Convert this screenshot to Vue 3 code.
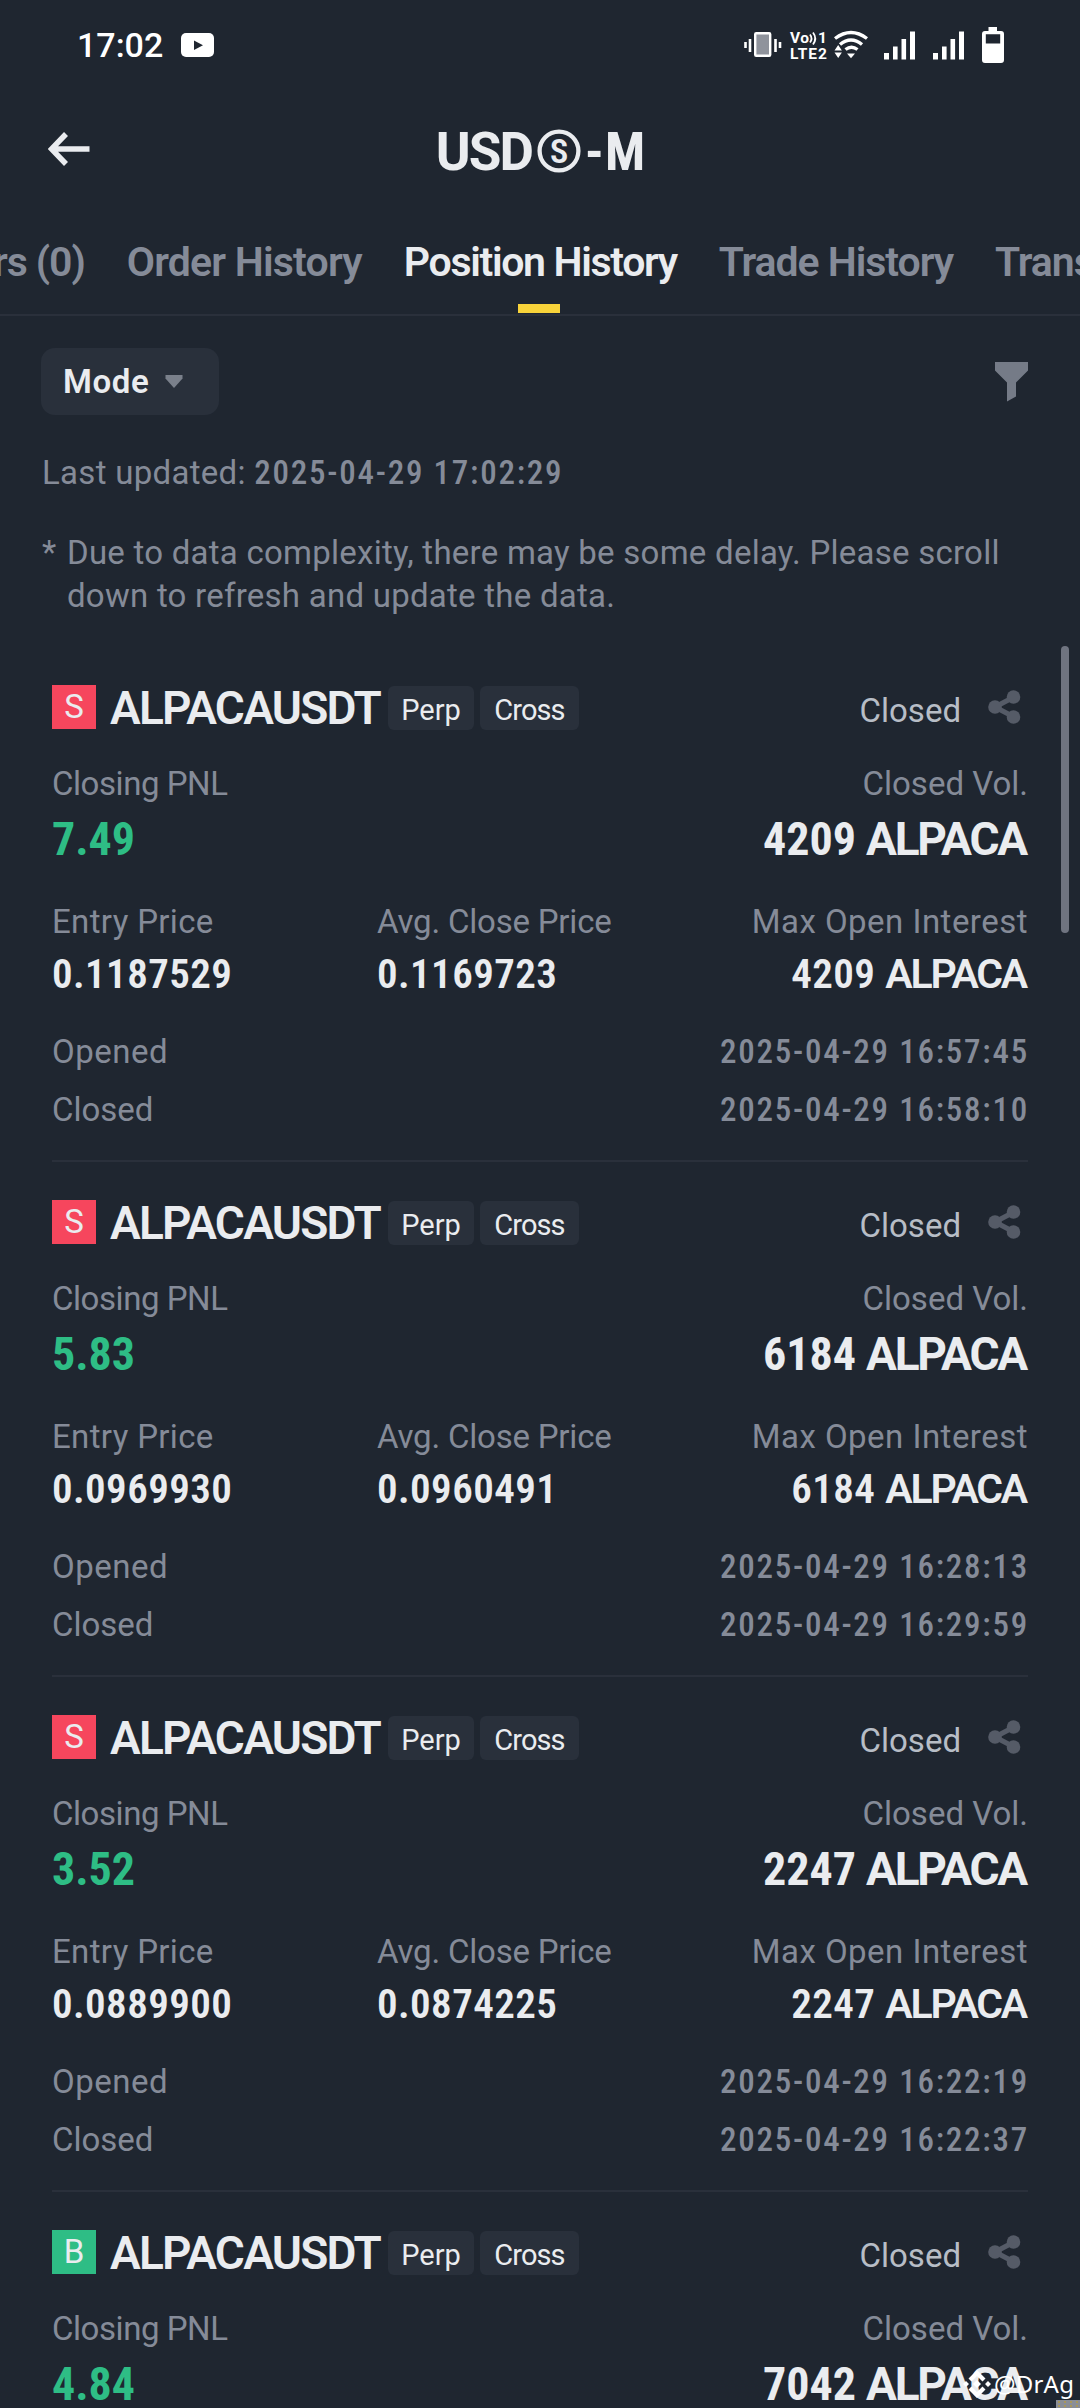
<template>
  <div class="screen">
    <!-- Status bar -->
    <div class="status-bar">
      <span class="clock">17:02</span>
      <svg class="youtube" width="33" height="24" viewBox="0 0 33 24">
        <rect width="33" height="24" rx="5" fill="#fff" />
        <path d="M13 7.5v9.5l9-4.7z" fill="#1f2630" />
      </svg>
      <div class="status-icons">
        <svg class="vibrate" width="38" height="28" viewBox="0 0 38 28">
          <rect x="11.2" y="2.2" width="15" height="22.6" rx="1" fill="#8f939c" stroke="#fff" stroke-width="2.4" />
          <path d="M1.5 11v6M6 8v13M31.5 8v13M36 11v6" stroke="#fff" stroke-width="2.6" />
        </svg>
        <svg class="volte" width="38" height="30" viewBox="0 0 38 30">
          <text x="0" y="13" class="volte-text" textLength="19">Vo</text>
          <path d="M20 4.5q3 4 0 8M23 2.5q4.500 6 0 12" fill="none" stroke="#fff" stroke-width="1.8" />
          <text x="28" y="12.500" class="volte-text">1</text>
          <text x="0" y="28.500" class="volte-text" textLength="37">LTE2</text>
        </svg>
        <svg class="wifi" width="34" height="30" viewBox="0 0 34 30">
          <g fill="none" stroke="#fff" stroke-width="3.4">
            <path d="M1 8.500Q17 -3.500 33 8.500" />
            <path d="M6 14.500Q17 5.500 28 14.500" />
            <path d="M11.500 19.500Q17.500 15 23.500 19.500" />
          </g>
          <path d="M13 23.500h8l-4 4.800z" fill="#fff" />
          <path d="M0.500 20.500l3.700-5.500 3.700 5.500zM0.500 22.500h7.400l-3.700 5.500z" fill="#fff" />
        </svg>
        <svg v-for="n in 2" :key="n" :class="'signal-' + n" width="32" height="29" viewBox="0 0 32 29" fill="#fff">
          <path d="M0 22h5v6.500H0zM9 15.500h4.600v13H9zM17.500 8h4.600v20.500h-4.600zM26 0.500h5v28h-5z" />
        </svg>
        <svg class="battery" width="22" height="36" viewBox="0 0 22 36">
          <path fill="#fff" fill-rule="evenodd" d="M6.500 0h8.500v4H19a3 3 0 0 1 3 3v26a3 3 0 0 1-3 3H3a3 3 0 0 1-3-3V7a3 3 0 0 1 3-3h3.500zM3.800 7.200v9.300h14.400V7.200z" />
        </svg>
      </div>
    </div>

    <!-- Header -->
    <header class="header">
      <svg class="back" width="42" height="34" viewBox="0 0 42 34" fill="none" stroke="#eaecef" stroke-width="5.500">
        <path d="M4 17h37.500M18 2L3.500 17 18 32" />
      </svg>
      <h1 class="title">
        <span class="title-usd">USD</span>
        <svg class="coin" width="44" height="44" viewBox="0 0 44 44">
          <circle cx="22" cy="22" r="19.400" fill="none" stroke="#eaecef" stroke-width="4.300" />
          <text x="22" y="34" class="coin-text" text-anchor="middle">S</text>
        </svg>
        <span class="title-m">-M</span>
      </h1>
    </header>

    <!-- Tabs -->
    <nav class="tabs">
      <a v-for="tab in tabs" :key="tab" class="tab" :class="{ active: tab === activeTab }" @click="activeTab = tab">{{ tab }}</a>
    </nav>

    <!-- Filters -->
    <div class="toolbar">
      <button class="mode">
        <span>Mode</span>
        <svg width="18" height="13" viewBox="0 0 18 13" fill="#7a808b"><path d="M0.500 0h17v3.500L9 13 0.500 3.500z" /></svg>
      </button>
      <svg class="funnel" width="33" height="40" viewBox="0 0 33 40" fill="#757b87">
        <path d="M0 0h33v8.500L21 20.500v14L12 39.500v-19L0 8.500z" />
      </svg>
    </div>
    <p class="updated">Last updated: <span class="stamp">2025-04-29 17:02:29</span></p>
    <div class="note">
      <span class="star">*</span>
      <p class="note-text">
        <span class="line">Due to data complexity, there may be some delay. Please scroll</span>
        <span class="line">down to refresh and update the data.</span>
      </p>
    </div>

    <!-- Positions -->
    <section class="list">
      <article v-for="(p, i) in positions" :key="i" class="card">
        <div class="card-head">
          <span class="side" :class="p.side === 'B' ? 'buy' : 'sell'">{{ p.side }}</span>
          <span class="symbol">ALPACAUSDT</span>
          <span class="tag perp">Perp</span>
          <span class="tag cross">Cross</span>
          <span class="state">Closed</span>
          <svg class="share" width="33" height="34" viewBox="0 0 33 34" fill="#555b67">
            <path d="M7 17L26 7M7 17l19 10" stroke="#555b67" stroke-width="5" />
            <circle cx="7" cy="17" r="6.800" />
            <circle cx="25.500" cy="7" r="6.800" />
            <circle cx="25.500" cy="27" r="6.800" />
          </svg>
        </div>

        <div class="line-row pnl-labels">
          <span class="closing">Closing PNL</span>
          <span>Closed Vol.</span>
        </div>
        <div class="pnl-values">
          <span class="pnl">{{ p.pnl }}</span>
          <span class="amount"><span>{{ p.volume }}</span><span class="unit">ALPACA</span></span>
        </div>

        <template v-if="p.entry">
          <div class="prices price-labels">
            <span class="entry">Entry Price</span>
            <span class="avg">Avg. Close Price</span>
            <span class="interest">Max Open Interest</span>
          </div>
          <div class="prices price-values">
            <span>{{ p.entry }}</span>
            <span>{{ p.close }}</span>
            <span class="amount"><span>{{ p.volume }}</span><span class="unit">ALPACA</span></span>
          </div>

          <div class="line-row opened">
            <span>Opened</span>
            <span class="stamp">{{ p.opened }}</span>
          </div>
          <div class="line-row closed">
            <span>Closed</span>
            <span class="stamp">{{ p.closed }}</span>
          </div>
        </template>
      </article>
    </section>

    <div class="scrollbar"></div>

    <!-- Watermark -->
    <div class="watermark">
      <svg width="28" height="28" viewBox="0 0 28 28" fill="#fff">
        <path d="M14 0l8.500 8.500-3 3L14 6l-5.500 5.500-3-3zM14 28l8.500-8.500-3-3L14 22l-5.500-5.500-3 3zM3 11l3 3-3 3-3-3zM25 11l3 3-3 3-3-3zM14 10l4 4-4 4-4-4z" />
      </svg>
      <span>@DrAg</span>
    </div>
    <div class="corner"></div>
  </div>
</template>

<script setup>
import { ref } from 'vue'

const tabs = ['rs (0)', 'Order History', 'Position History', 'Trade History', 'Trans']
const activeTab = ref('Position History')

const positions = [
  {
    side: 'S',
    pnl: '7.49',
    volume: '4209',
    entry: '0.1187529',
    close: '0.1169723',
    opened: '2025-04-29 16:57:45',
    closed: '2025-04-29 16:58:10'
  },
  {
    side: 'S',
    pnl: '5.83',
    volume: '6184',
    entry: '0.0969930',
    close: '0.0960491',
    opened: '2025-04-29 16:28:13',
    closed: '2025-04-29 16:29:59'
  },
  {
    side: 'S',
    pnl: '3.52',
    volume: '2247',
    entry: '0.0889900',
    close: '0.0874225',
    opened: '2025-04-29 16:22:19',
    closed: '2025-04-29 16:22:37'
  },
  {
    side: 'B',
    pnl: '4.84',
    volume: '7042'
  }
]
</script>

<style>
body {
  background: #1f2630;
}
</style>

<style scoped>
.screen {
  position: relative;
  width: 1080px;
  height: 2408px;
  overflow: hidden;
  background: #1f2630;
  color: #858b98;
  font-family: Roboto, "Liberation Sans", sans-serif;
  font-size: 33px;
  white-space: nowrap;
}

p,
h1 {
  margin: 0;
}

svg {
  flex: none;
  display: block;
}

/* Status bar */
.status-bar {
  display: flex;
  align-items: center;
  height: 90px;
  padding: 0 76px 0 77px;
  color: #fff;
}

.clock {
  width: 104px;
  font-size: 34px;
  font-weight: 500;
  line-height: 40px;
}

.status-icons {
  display: flex;
  align-items: center;
  margin-left: auto;
}

.volte {
  margin-left: 8px;
  overflow: visible;
}

.volte-text {
  font-size: 15.5px;
  font-weight: 700;
  fill: #fff;
}

.wifi {
  margin-left: 6px;
}

.signal-1 {
  margin-left: 16px;
}

.signal-2 {
  margin-left: 17px;
}

.battery {
  margin-left: 17px;
}

/* Header */
.header {
  display: grid;
  grid-template-columns: 1fr auto 1fr;
  align-items: center;
  height: 124px;
  padding: 0 46px 0 48px;
}

.back {
  margin-bottom: 7px;
}

.title {
  display: flex;
  align-items: center;
  color: #eaecef;
  font-size: 53px;
  font-weight: 700;
  line-height: 62px;
}

.title-usd {
  letter-spacing: -2px;
}

.coin {
  margin: 0 4px 2px 5px;
}

.coin-text {
  font-size: 34px;
  font-weight: 600;
  font-stretch: 75%;
  fill: #eaecef;
}

.title-m {
  font-stretch: 75%;
  letter-spacing: 1px;
}

/* Tabs */
.tabs {
  display: flex;
  height: 100px;
  gap: 42px;
  margin-left: -7px;
  border-bottom: 2px solid #2a303b;
  font-size: 41px;
  font-weight: 600;
  line-height: 97px;
  letter-spacing: -1.05px;
}

.tab {
  position: relative;
}

.tab:nth-child(2) {
  letter-spacing: -0.8px;
}

.tab.active {
  color: #eaecef;
  letter-spacing: -1.34px;
}

.tab.active::after {
  content: "";
  position: absolute;
  left: 50%;
  bottom: 1px;
  width: 42px;
  height: 9px;
  margin-left: -22px;
  background: #f8d33a;
}

/* Filters */
.toolbar {
  display: flex;
  justify-content: space-between;
  align-items: center;
  height: 67px;
  margin-top: 32px;
  padding: 0 52px 0 41px;
}

.mode {
  display: flex;
  align-items: center;
  gap: 16px;
  width: 178px;
  height: 67px;
  padding: 0 0 0 22px;
  border: 0;
  border-radius: 14px;
  background: #29303b;
  color: #eaecef;
  font: 600 33px/40px Roboto, sans-serif;
  letter-spacing: 0.6px;
}

.updated {
  margin: 36px 0 0 42px;
  line-height: 43px;
  letter-spacing: 0.3px;
}

.stamp {
  margin-right: -1px;
  font-stretch: 75%;
  font-weight: 500;
  letter-spacing: 1.75px;
}

.note {
  display: flex;
  margin: 37px 0 0 42px;
  line-height: 43px;
  letter-spacing: 0.25px;
}

.star {
  width: 25px;
}

.line {
  display: block;
}

/* Positions */
.list {
  margin-top: 30px;
  padding: 0 52px;
}

.card {
  height: 475px;
  padding-top: 38px;
  border-bottom: 2px solid #2a303b;
}

.card-head {
  display: flex;
  align-items: center;
  height: 45px;
}

.side {
  width: 44px;
  height: 44px;
  margin-bottom: 1px;
  color: #eaecef;
  line-height: 44px;
  text-align: center;
}

.sell {
  background: #f6465d;
}

.buy {
  background: #2ebd85;
}

.symbol {
  width: 278px;
  margin-left: 14px;
  color: #eaecef;
  font-size: 46px;
  font-weight: 600;
  letter-spacing: -1.75px;
}

.tag {
  height: 42px;
  margin-top: 1px;
  padding-top: 2px;
  border-radius: 6px;
  background: #29303b;
  color: #eaecef;
  font-size: 29px;
  line-height: 44px;
  text-align: center;
}

.perp {
  width: 86px;
}

.cross {
  width: 99px;
  margin-left: 6px;
  letter-spacing: -0.9px;
}

.state {
  margin: 5px 27px 0 auto;
  color: #b7bdc6;
}

.share {
  margin: 0 7px 2px 0;
}

.line-row,
.pnl-values {
  display: flex;
  justify-content: space-between;
  line-height: 40px;
}

.pnl-labels {
  margin-top: 34px;
}

.closing {
  letter-spacing: -0.45px;
}

.pnl-values {
  margin-top: 10px;
  font-size: 46px;
  font-weight: 700;
  line-height: 50px;
  font-stretch: 75%;
}

.pnl {
  color: #2ebd85;
}

.amount {
  display: flex;
  gap: 10px;
  margin-right: 2px;
  color: #eaecef;
}

.unit {
  font-stretch: 100%;
  letter-spacing: -2.2px;
}

.prices {
  display: grid;
  grid-template-columns: 325px 1fr auto;
}

.price-labels {
  margin-top: 38px;
  line-height: 40px;
}

.entry {
  letter-spacing: 0.35px;
}

.avg {
  letter-spacing: -0.2px;
}

.interest {
  letter-spacing: 0.48px;
}

.price-values {
  margin-top: 9px;
  color: #eaecef;
  font-size: 41px;
  font-weight: 600;
  line-height: 46px;
  font-stretch: 75%;
  letter-spacing: 0.4px;
}

.opened {
  margin-top: 35px;
  letter-spacing: 0.5px;
}

.closed {
  margin-top: 18px;
}

/* Overlays */
.scrollbar {
  position: absolute;
  top: 646px;
  right: 11px;
  width: 8px;
  height: 287px;
  border-radius: 4px;
  background: #6f7480;
}

.watermark {
  position: absolute;
  top: 2366px;
  left: 963px;
  display: flex;
  align-items: center;
  gap: 3px;
  height: 36px;
  color: #fff;
  font: 400 24px/36px "Noto Sans", sans-serif;
}

.watermark span {
  letter-spacing: 0.2px;
}

.corner {
  position: absolute;
  right: 0;
  bottom: 0;
  width: 24px;
  height: 8px;
  background: radial-gradient(circle, #a8975a 0.8px, #8a8e96 1.2px) 0 0 / 6px 4px;
}
</style>
